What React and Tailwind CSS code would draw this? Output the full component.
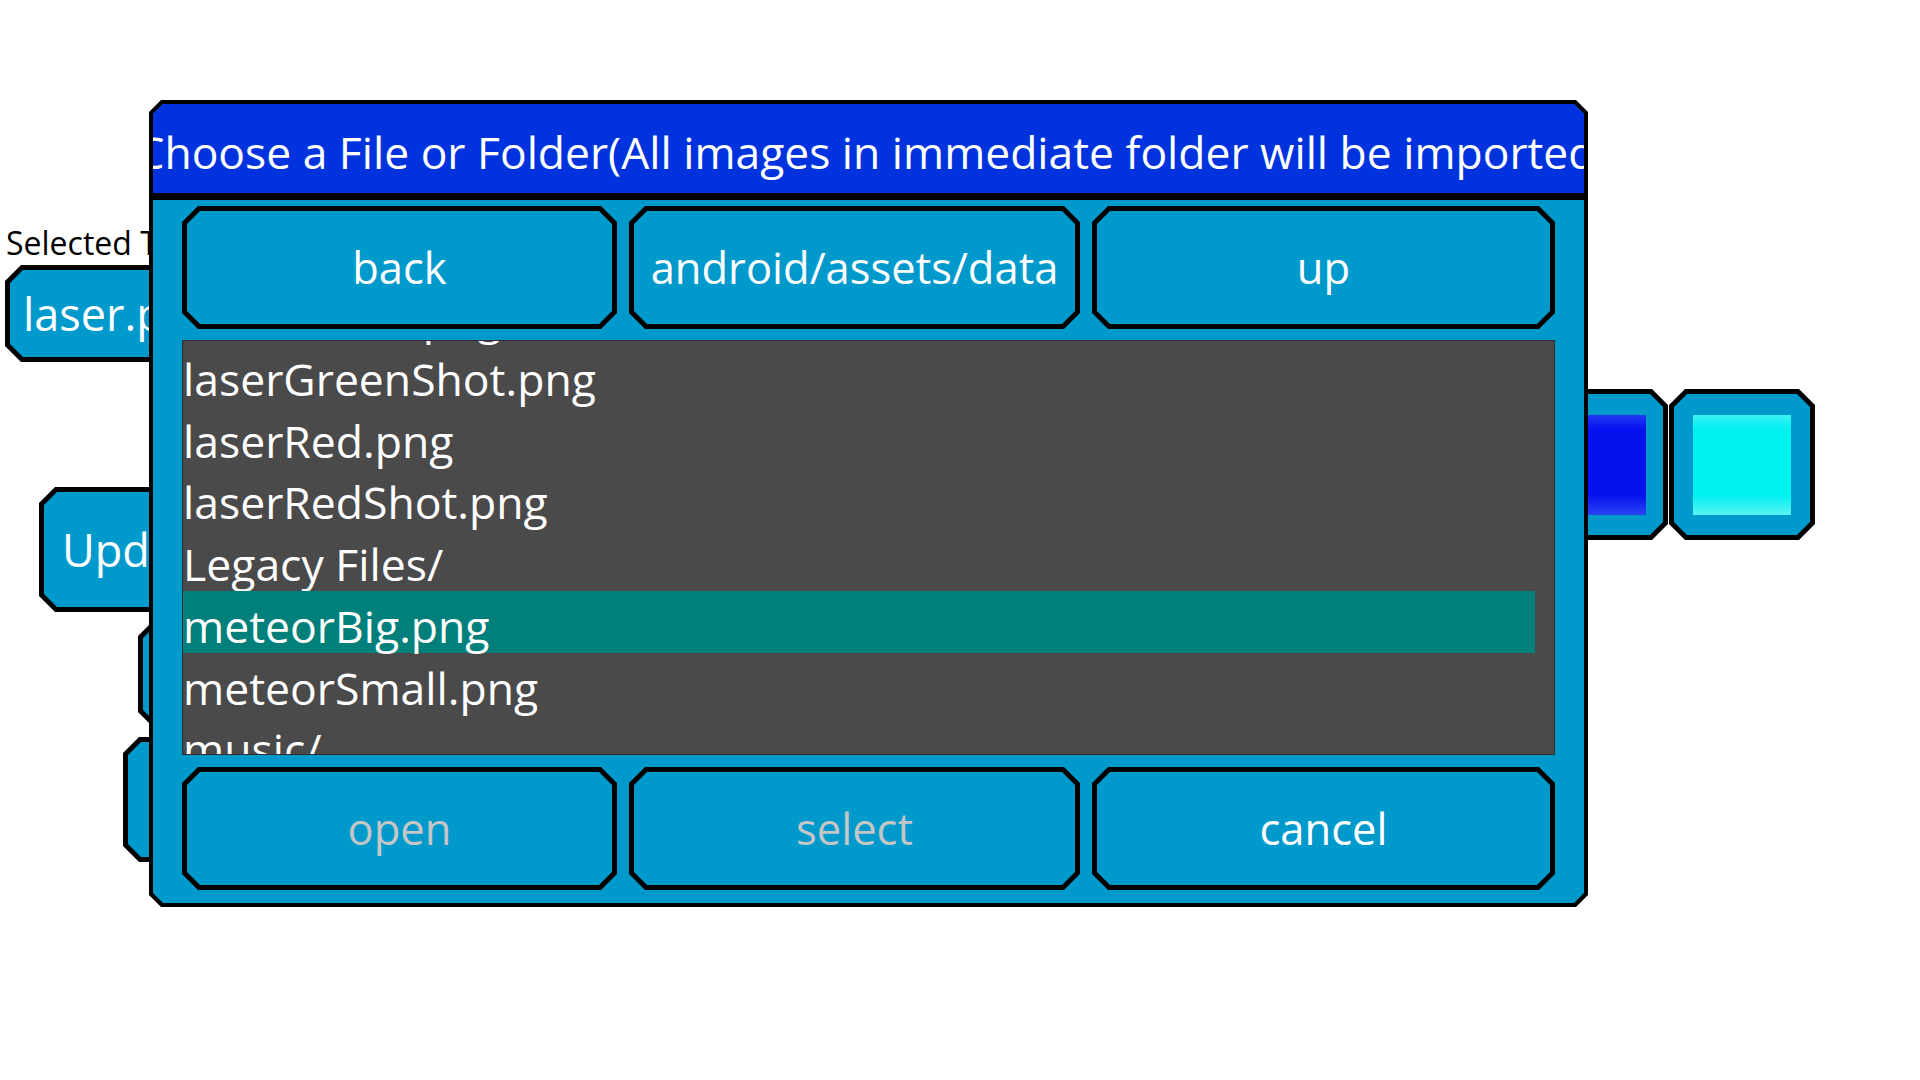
const OCT16 =
  "[clip-path:polygon(16px_0,calc(100%_-_16px)_0,100%_16px,100%_calc(100%_-_16px),calc(100%_-_16px)_100%,16px_100%,0_calc(100%_-_16px),0_16px)]";
const OCT13 =
  "[clip-path:polygon(13px_0,calc(100%_-_13px)_0,100%_13px,100%_calc(100%_-_13px),calc(100%_-_13px)_100%,13px_100%,0_calc(100%_-_13px),0_13px)]";
const OCT12 =
  "[clip-path:polygon(12px_0,calc(100%_-_12px)_0,100%_12px,100%_calc(100%_-_12px),calc(100%_-_12px)_100%,12px_100%,0_calc(100%_-_12px),0_12px)]";
const OCT10 =
  "[clip-path:polygon(10px_0,calc(100%_-_10px)_0,100%_10px,100%_calc(100%_-_10px),calc(100%_-_10px)_100%,10px_100%,0_calc(100%_-_10px),0_10px)]";

const files = [
  "laserGreen.png",
  "laserGreenShot.png",
  "laserRed.png",
  "laserRedShot.png",
  "Legacy Files/",
  "meteorBig.png",
  "meteorSmall.png",
  "music/",
]

function Btn({ w, muted, children }) {
  return (
    <div className={`${w} h-[123px] shrink-0 bg-black p-[5px] ${OCT16}`}>
      <div
        className={`flex h-full w-full items-center justify-center bg-[#0099cc] text-[43.5px] ${OCT13} ${
          muted ? "text-[#c4c6c8]" : "text-white"
        }`}
      >
        {children}
      </div>
    </div>
  )
}

// widget sitting on the editor canvas behind the dialog
function Widget({ className, children }) {
  return (
    <div className={`absolute bg-black p-[5px] ${OCT16} ${className}`}>
      <div className={`flex h-full w-full items-center bg-[#0099cc] ${OCT13}`}>{children}</div>
    </div>
  )
}

export default function App() {
  return (
    <div className="relative h-[1080px] w-[1920px] overflow-hidden bg-white font-['Open_Sans',sans-serif]">
      {/* canvas behind */}
      <div className="absolute left-[6px] top-[227px] text-[32px] leading-[32px] text-black">Selected Texture:</div>
      <Widget className="left-[5px] top-[265px] h-[97px] w-[420px]">
        <span className="pl-[13px] text-[45px] text-white">laser.png</span>
      </Widget>
      <Widget className="left-[39px] top-[487px] h-[125px] w-[200px]">
        <span className="w-full text-center text-[45px] text-white">Update</span>
      </Widget>
      <Widget className="left-[138px] top-[620px] h-[108px] w-[220px]" />
      <Widget className="left-[123px] top-[737px] h-[125px] w-[240px]" />

      <Widget className="left-[1480px] top-[389px] h-[151px] w-[188px]">
        <div className="ml-auto mr-[17px] h-[100px] w-[140px] bg-[linear-gradient(to_bottom,#2238f4_0%,#0612ee_14%,#0612ee_80%,#2a44f4_100%)]" />
      </Widget>
      <Widget className="left-[1669px] top-[389px] h-[151px] w-[146px]">
        <div className="mx-auto h-[100px] w-[98px] bg-[linear-gradient(to_bottom,#3af2f2_0%,#00f0f0_14%,#00f0f0_80%,#5af4f4_100%)]" />
      </Widget>

      {/* file chooser dialog */}
      <div className={`absolute left-[149px] top-[100px] flex h-[807px] w-[1439px] flex-col bg-black p-[4px] ${OCT12}`}>
        <div className={`flex flex-1 flex-col bg-[#0099cc] ${OCT10}`}>
          <div className="flex h-[96px] shrink-0 items-center justify-center overflow-hidden whitespace-nowrap border-b-[7px] border-black bg-[#0033dd] pl-[8px] pt-[7px] text-[44.4px] text-white">
            Choose a File or Folder(All images in immediate folder will be imported)
          </div>

          <div className="flex flex-col px-[29px] pt-[6px]">
            <div className="flex gap-[12px]">
              <Btn w="w-[435px]">back</Btn>
              <Btn w="w-[451px]">android/assets/data</Btn>
              <Btn w="w-[463px]">up</Btn>
            </div>

            <div className="mt-[11px] h-[415px] overflow-hidden border border-[#2e2e2e] bg-[#4a4a4a]">
              <div className="-mt-[59px] flex flex-col">
                {files.map((f) => (
                  <div
                    key={f}
                    className={`h-[61.75px] w-[1352px] shrink-0 overflow-visible whitespace-nowrap pt-[4px] text-[44.5px] leading-[61.75px] text-white ${
                      f === "meteorBig.png" ? "bg-[#007f7b]" : ""
                    }`}
                  >
                    {f}
                  </div>
                ))}
              </div>
            </div>

            <div className="mt-[12px] flex gap-[12px]">
              <Btn w="w-[435px]" muted>open</Btn>
              <Btn w="w-[451px]" muted>select</Btn>
              <Btn w="w-[463px]">cancel</Btn>
            </div>
          </div>
        </div>
      </div>
    </div>
  )
}
